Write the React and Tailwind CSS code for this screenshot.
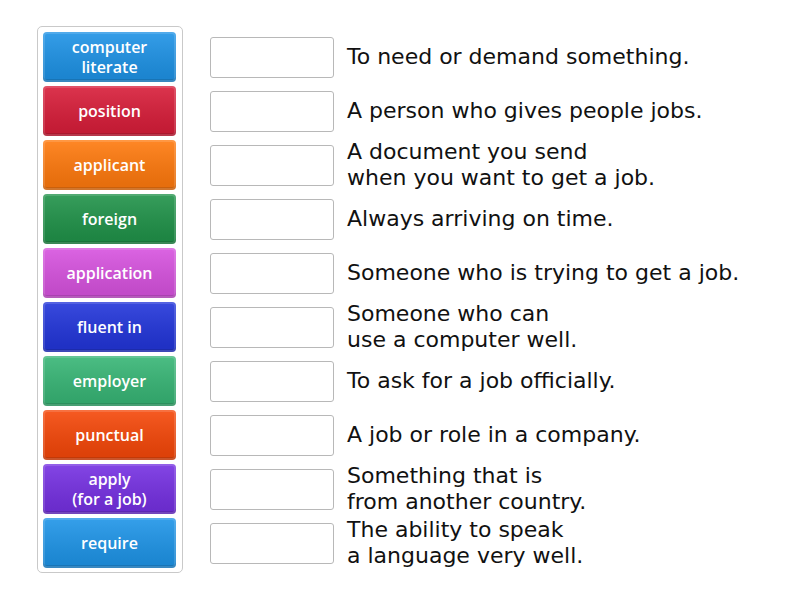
import React from 'react';

const pairs = [
  { term: ['computer', 'literate'], color: 'bg-[#1f93e6]', def: ['To need or demand something.'] },
  { term: ['position'], color: 'bg-[#d81e3a]', def: ['A person who gives people jobs.'] },
  { term: ['applicant'], color: 'bg-[#ff7a0e]', def: ['A document you send', 'when you want to get a job.'] },
  { term: ['foreign'], color: 'bg-[#21934a]', def: ['Always arriving on time.'] },
  { term: ['application'], color: 'bg-[#d753df]', def: ['Someone who is trying to get a job.'] },
  { term: ['fluent in'], color: 'bg-[#2336da]', def: ['Someone who can', 'use a computer well.'] },
  { term: ['employer'], color: 'bg-[#38b676]', def: ['To ask for a job officially.'] },
  { term: ['punctual'], color: 'bg-[#f5480a]', def: ['A job or role in a company.'] },
  { term: ['apply', '(for a job)'], color: 'bg-[#7631e2]', def: ['Something that is', 'from another country.'] },
  { term: ['require'], color: 'bg-[#1f95e8]', def: ['The ability to speak', 'a language very well.'] },
];

function Tile({ term, color }) {
  return (
    <div
      className={`${color} h-[50px] rounded-[4px] bg-linear-to-b from-white/10 to-black/10 shadow-[inset_0_0_0_2px_rgba(255,255,255,0.14),inset_0_-3px_0_rgba(0,0,0,0.12)] flex items-center justify-center text-center text-white text-[16px] leading-[20px] font-semibold`}
    >
      <span>
        {term.length > 1 ? <>{term[0]}<br />{term[1]}</> : term[0]}
      </span>
    </div>
  );
}

export default function App() {
  return (
    <div className="w-[800px] h-[600px] bg-white pl-[37px] pt-[26px] flex font-['Open_Sans',sans-serif]">
      {/* tiles */}
      <div className="w-[146px] h-[547px] border border-[#c9c9c9] rounded-[5px] pt-[5px] pl-[5px] pr-[6px] flex flex-col gap-[4px]">
        {pairs.map(p => <Tile key={p.term.join()} term={p.term} color={p.color} />)}
      </div>

      {/* targets */}
      <div className="pt-[6px] pl-[27px] flex flex-col gap-[4px]">
        {pairs.map(p => (
          <div key={p.def[0]} className="h-[50px] flex items-center">
            <div className="w-[124px] h-[41px] border border-[#b8b8b8] rounded-[3px] bg-white shrink-0" />
            <div className="ml-[13px] text-[22px] leading-[26px] text-[#111] whitespace-nowrap font-['DejaVu_Sans',sans-serif]">
              {p.def.length > 1 ? <>{p.def[0]}<br />{p.def[1]}</> : p.def[0]}
            </div>
          </div>
        ))}
      </div>
    </div>
  );
}
